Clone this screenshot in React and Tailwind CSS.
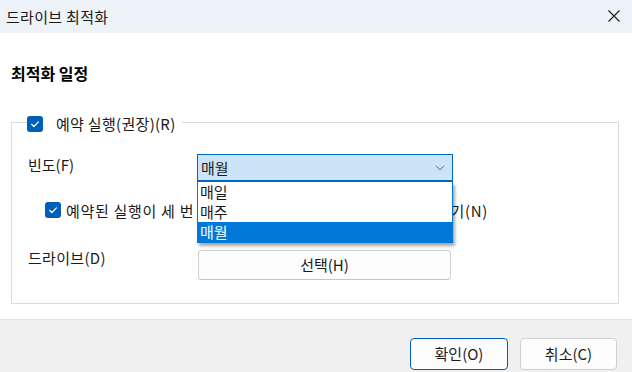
import React from "react";

function Check({ className = "" }) {
  return (
    <span className={`flex h-4 w-4 shrink-0 items-center justify-center rounded-[3px] bg-[#005fb8] ${className}`}>
      <svg width="16" height="16" viewBox="0 0 16 16">
        <path d="M4.6 8.3 L6.9 10.5 L11.4 5.9" fill="none" stroke="#ffffff" strokeWidth="1.2" strokeLinecap="round" strokeLinejoin="round" />
      </svg>
    </span>
  );
}

export default function App() {
  return (
    <div className="flex h-[372px] w-[632px] flex-col overflow-hidden bg-white font-['Noto_Sans_CJK_KR','Noto_Sans',sans-serif] text-[15px] leading-[20px] text-[#1a1a1a]">
      {/* title bar */}
      <div className="flex h-[33px] shrink-0 items-center justify-between bg-[#eef3f9] pl-[6px] pr-[12px]">
        <span className="text-[15px] tracking-[0.3px]">드라이브 최적화</span>
        <svg width="12" height="12" viewBox="0 0 12 12" className="mt-[-2px]">
          <path d="M0.5 0.5 L11.5 11.5 M11.5 0.5 L0.5 11.5" stroke="#1a1a1a" strokeWidth="1.1" fill="none" />
        </svg>
      </div>

      {/* body */}
      <div className="flex-1 px-[11px] pt-[30px]">
        <div className="text-[16px] font-bold leading-[20px] text-black">최적화 일정</div>

        <fieldset className="mt-[33px] h-[188px] w-[608px] border border-[#dcdcdc] pl-[16px]">
          <legend className="ml-[-1px] h-[12px] pr-[6px]">
            <div className="flex items-start">
              <Check />
              <span className="ml-[13px] mt-[-2px] whitespace-nowrap tracking-[0.3px]">예약 실행(권장)(R)</span>
            </div>
          </legend>

          {/* frequency row */}
          <div className="mt-[26px] flex items-start">
            <span className="mt-[1px] w-[169px]">빈도(F)</span>
            <div className="relative z-10 w-[256px]">
              <div className="flex h-[28px] items-center justify-between border border-b-2 border-[#0067c0] bg-[#cce4f7] pl-[3px] pr-[7px]">
                <span>매월</span>
                <svg width="10" height="6" viewBox="0 0 10 6">
                  <path d="M1 0.8 L5 4.8 L9 0.8" fill="none" stroke="#606060" strokeWidth="1" />
                </svg>
              </div>
              <div className="absolute left-0 top-full w-full border border-t-0 border-[#0078d7] bg-white shadow-[2px_3px_3px_rgba(0,0,0,0.35)]">
                <div className="h-[20px] pl-[2px] leading-[20px]">매일</div>
                <div className="h-[20px] pl-[2px] leading-[20px]">매주</div>
                <div className="h-[20px] bg-[#0078d7] pl-[2px] leading-[20px] text-white">매월</div>
              </div>
            </div>
          </div>

          {/* priority row */}
          <div className="mt-[20px] flex items-start pl-[17px]">
            <Check />
            <span className="ml-[5px] mt-[-1px] whitespace-nowrap tracking-[0.7px]">예약된 실행이 세 번 연속으로 누락되면 작업 우선 순위 높이기(N)</span>
          </div>

          {/* drive row */}
          <div className="mt-[29px] flex items-start">
            <span className="mt-[-2px] w-[170px] tracking-[0.3px]">드라이브(D)</span>
            <div className="bg-[#f9f9f9]">
              <button className="flex h-[30px] w-[253px] items-center justify-center rounded-[4px] border border-[#d0d0d0] border-b-[#c4c4c4] bg-[#fdfdfd]">
                선택(H)
              </button>
            </div>
          </div>
        </fieldset>
      </div>

      {/* footer */}
      <div className="flex h-[53px] shrink-0 items-start justify-end gap-[12px] border-t border-[#e5e5e5] bg-[#f0f0f0] pr-[15px] pt-[18px]">
        <button className="flex h-[32px] w-[98px] items-center justify-center rounded-[4px] border border-[#005fb8] bg-[#fdfdfd]">
          확인(O)
        </button>
        <button className="flex h-[32px] w-[97px] items-center justify-center rounded-[4px] border border-[#d0d0d0] bg-[#fdfdfd]">
          취소(C)
        </button>
      </div>
    </div>
  );
}
